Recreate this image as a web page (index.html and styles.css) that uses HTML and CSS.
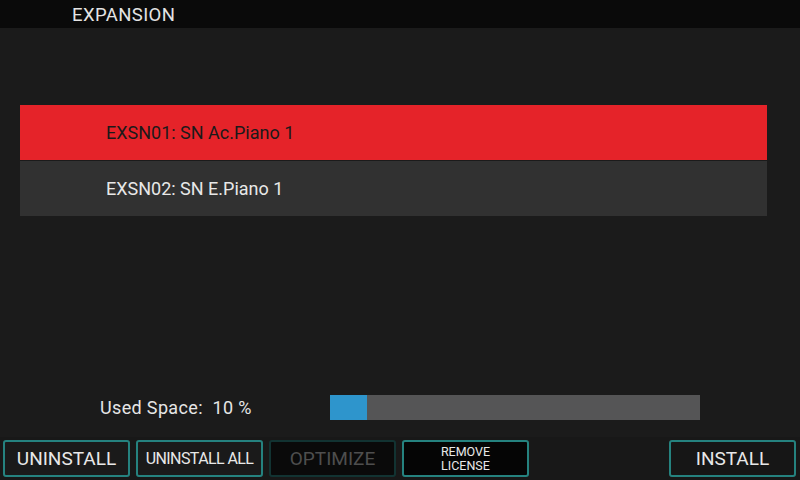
FILE: index.html
```html
<!DOCTYPE html>
<html>
<head>
<meta charset="utf-8">
<link rel="stylesheet" href="styles.css">
</head>
<body>
<div class="screen">
  <div class="header"><span class="title">EXPANSION</span></div>
  <div class="main">
    <div class="list">
      <div class="row selected">EXSN01: SN Ac.Piano 1</div>
      <div class="row">EXSN02: SN E.Piano 1</div>
    </div>
    <div class="usage">
      <span class="usage-label">Used Space:&nbsp; 10 %</span>
      <div class="bar"><div class="bar-fill" style="width:10%"></div></div>
    </div>
  </div>
  <div class="footer">
    <div class="btn">UNINSTALL</div>
    <div class="btn narrow">UNINSTALL ALL</div>
    <div class="btn disabled">OPTIMIZE</div>
    <div class="btn small">REMOVE<br>LICENSE</div>
    <div class="btn install">INSTALL</div>
  </div>
</div>
</body>
</html>
```

FILE: styles.css
```css
html, body {
  margin: 0;
  padding: 0;
  background: #1b1b1b;
}
.screen {
  width: 800px;
  height: 480px;
  display: flex;
  flex-direction: column;
  font-family: Roboto, "Liberation Sans", sans-serif;
  color: #e6e6e6;
  background: #1b1b1b;
  overflow: hidden;
}
.header {
  height: 28px;
  background: #0a0a0a;
  display: flex;
  align-items: center;
  padding: 1px 0 0 72px;
  box-sizing: border-box;
  flex-shrink: 0;
}
.title {
  font-size: 18.5px;
  color: #e4e4e4;
  letter-spacing: 0.4px;
}
.main {
  flex: 1;
  display: flex;
  flex-direction: column;
}
.list {
  margin: 77px 33px 0 20px;
  display: flex;
  flex-direction: column;
  gap: 1px;
}
.row {
  height: 55px;
  background: #313131;
  display: flex;
  align-items: center;
  padding-left: 86px;
  font-size: 18px;
  color: #e8e8e8;
}
.row.selected {
  background: #e52329;
  color: #1a1a1a;
}
.usage {
  margin-top: auto;
  margin-bottom: 17px;
  display: flex;
  align-items: center;
  padding-left: 100px;
  height: 25px;
}
.usage-label {
  width: 230px;
  font-size: 18px;
  letter-spacing: 0.35px;
  color: #e6e6e6;
  white-space: pre;
}
.bar {
  width: 370px;
  height: 25px;
  background: #555556;
  display: flex;
}
.bar-fill {
  background: #2e95cc;
  height: 100%;
}
.footer {
  height: 43px;
  background: #181818;
  display: flex;
  gap: 6px;
  padding: 3px 4px 0 3px;
  box-sizing: border-box;
  flex-shrink: 0;
}
.btn {
  width: 127px;
  height: 37px;
  box-sizing: border-box;
  border: 2px solid #25827f;
  border-radius: 3px;
  background: #1a1a1a;
  display: flex;
  align-items: center;
  justify-content: center;
  font-size: 19px;
  color: #e8e8e8;
  text-align: center;
}
.btn.narrow {
  font-size: 16px;
  letter-spacing: -0.6px;
}
.btn.disabled {
  background: #0a0a0a;
  border-color: #123332;
  color: #4e4e4e;
}
.btn.small {
  background: #050505;
  font-size: 12.5px;
  line-height: 14px;
}
.btn.install {
  margin-left: auto;
  background: #161616;
}
```
